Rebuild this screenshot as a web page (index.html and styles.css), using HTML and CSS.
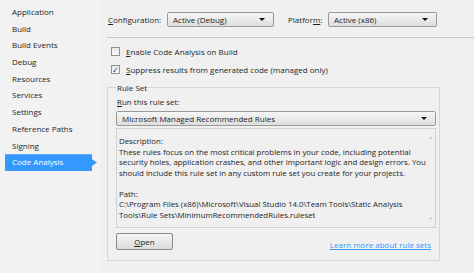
FILE: index.html
```html
<!DOCTYPE html>
<html lang="en">
<head>
    <meta charset="UTF-8">
    <title>Code Analysis</title>
    <link rel="stylesheet" href="styles.css">
</head>
<body>
    <div class="window">
        <nav class="tabs">
            <div class="tab">Application</div>
            <div class="tab">Build</div>
            <div class="tab">Build Events</div>
            <div class="tab">Debug</div>
            <div class="tab">Resources</div>
            <div class="tab">Services</div>
            <div class="tab">Settings</div>
            <div class="tab">Reference Paths</div>
            <div class="tab">Signing</div>
            <div class="tab selected">Code Analysis</div>
        </nav>

        <main class="page">
            <div class="config-row">
                <span class="label"><u>C</u>onfiguration:</span>
                <div class="combo combo-config">Active (Debug)<span class="arrow"></span></div>
                <span class="label label-platform">Platfor<u>m</u>:</span>
                <div class="combo combo-platform">Active (x86)<span class="arrow"></span></div>
            </div>

            <div class="options">
                <label class="check"><span class="box"></span><span><u>E</u>nable Code Analysis on Build</span></label>
                <label class="check"><span class="box checked">&#10003;</span><span><u>S</u>uppress results from generated code (managed only)</span></label>
            </div>

            <fieldset class="group">
                <legend>Rule Set</legend>
                <div class="run-label"><u>R</u>un this rule set:</div>
                <div class="combo combo-rules">Microsoft Managed Recommended Rules<span class="arrow"></span></div>
                <div class="description">
                    <div class="desc-text">
                        <p>Description:<br>These rules focus on the most critical problems in your code, including potential security holes, application crashes, and other important logic and design errors. You should include this rule set in any custom rule set you create for your projects.</p>
                        <p>Path:<br>C:\Program Files (x86)\Microsoft\Visual Studio 14.0\Team Tools\Static Analysis Tools\Rule Sets\MinimumRecommendedRules.ruleset</p>
                    </div>
                    <div class="scrollbar"><span>&#9650;</span><span>&#9660;</span></div>
                </div>
                <div class="bottom-row">
                    <button class="button"><u>O</u>pen</button>
                    <a class="link" href="#">Learn more about rule sets</a>
                </div>
            </fieldset>
        </main>
    </div>
</body>
</html>
```

FILE: styles.css
```css
body {
    margin: 0;
    background-color: #f0f0f0;
    font-family: "Open Sans", sans-serif;
    font-size: 8px;
    color: #1e1e1e;
}
.window {
    display: flex;
    width: 474px;
    height: 273px;
}
.tabs {
    width: 100px;
    padding-top: 4px;
    background-color: #f2f2f2;
}
.tab {
    height: 16.7px;
    line-height: 16.7px;
    padding-left: 12px;
    font-size: 8px;
}
.tab.selected {
    margin-left: 5px;
    padding-left: 7px;
    width: 85px;
    color: white;
    background-color: #3399ff;
    clip-path: polygon(0 0, 87px 0, 87px 5px, 92px 8.35px, 87px 11.7px, 87px 100%, 0 100%);
}
.page {
    flex: 1;
    padding-left: 7px;
}
.config-row {
    display: flex;
    align-items: center;
    height: 15px;
    padding: 12px 0 10px;
    border-bottom: 1px solid #c8c8c8;
}
.label {
    margin-left: 1px;
    width: 59px;
}
.label-platform {
    margin-left: 14px;
    width: 40px;
}
.combo {
    position: relative;
    box-sizing: border-box;
    height: 15px;
    line-height: 13px;
    padding-left: 5px;
    border: 1px solid #9a9a9a;
    border-radius: 2px;
    background: linear-gradient(#f6f6f6, #dedede);
}
.combo-config {
    width: 107px;
}
.combo-platform {
    width: 109px;
}
.arrow {
    position: absolute;
    right: 8px;
    top: 5px;
    border-left: 3px solid transparent;
    border-right: 3px solid transparent;
    border-top: 3px solid #111;
}
.options {
    padding: 5px 0 0 4px;
}
.check {
    display: flex;
    align-items: center;
    height: 17.5px;
}
.box {
    box-sizing: border-box;
    width: 9px;
    height: 9px;
    margin-right: 6px;
    border: 1px solid #8f8f8f;
    background: linear-gradient(#e6e6e6, #fafafa);
    font-size: 8px;
    line-height: 7px;
    text-align: center;
    color: #2c2c5c;
}
.group {
    box-sizing: border-box;
    width: 333px;
    height: 179px;
    margin: 4px 0 0 0;
    padding: 0 3px 0 8px;
    border: 1px solid #d6d6d6;
}
.group legend {
    padding: 0 1px;
    margin-left: 0;
}
.run-label {
    margin: 3px 0 4px 1px;
}
.combo-rules {
    width: 320px;
    margin-bottom: 2px;
}
.description {
    display: flex;
    box-sizing: border-box;
    width: 320px;
    height: 100px;
    border: 1px solid #d0d0d0;
    background-color: #f0f0f0;
}
.desc-text {
    flex: 1;
    padding: 7px 0 0 2px;
    line-height: 10.5px;
    font-size: 7.85px;
}
.desc-text p {
    margin: 0 0 10.5px 0;
}
.scrollbar {
    display: flex;
    flex-direction: column;
    justify-content: space-between;
    width: 9px;
    padding: 6px 0 6px;
    font-size: 4px;
    text-align: center;
    color: #b0b0b0;
}
.bottom-row {
    display: flex;
    justify-content: space-between;
    align-items: flex-end;
    margin-top: 5px;
    width: 315px;
}
.button {
    width: 57px;
    height: 17px;
    padding: 0;
    border: 1px solid #8a8a8a;
    border-radius: 2px;
    background: linear-gradient(#f4f4f4, #dcdcdc);
    font-family: "Open Sans", sans-serif;
    font-size: 8px;
    color: #1e1e1e;
}
.link {
    margin-bottom: 0;
    color: #3399ff;
}
```
